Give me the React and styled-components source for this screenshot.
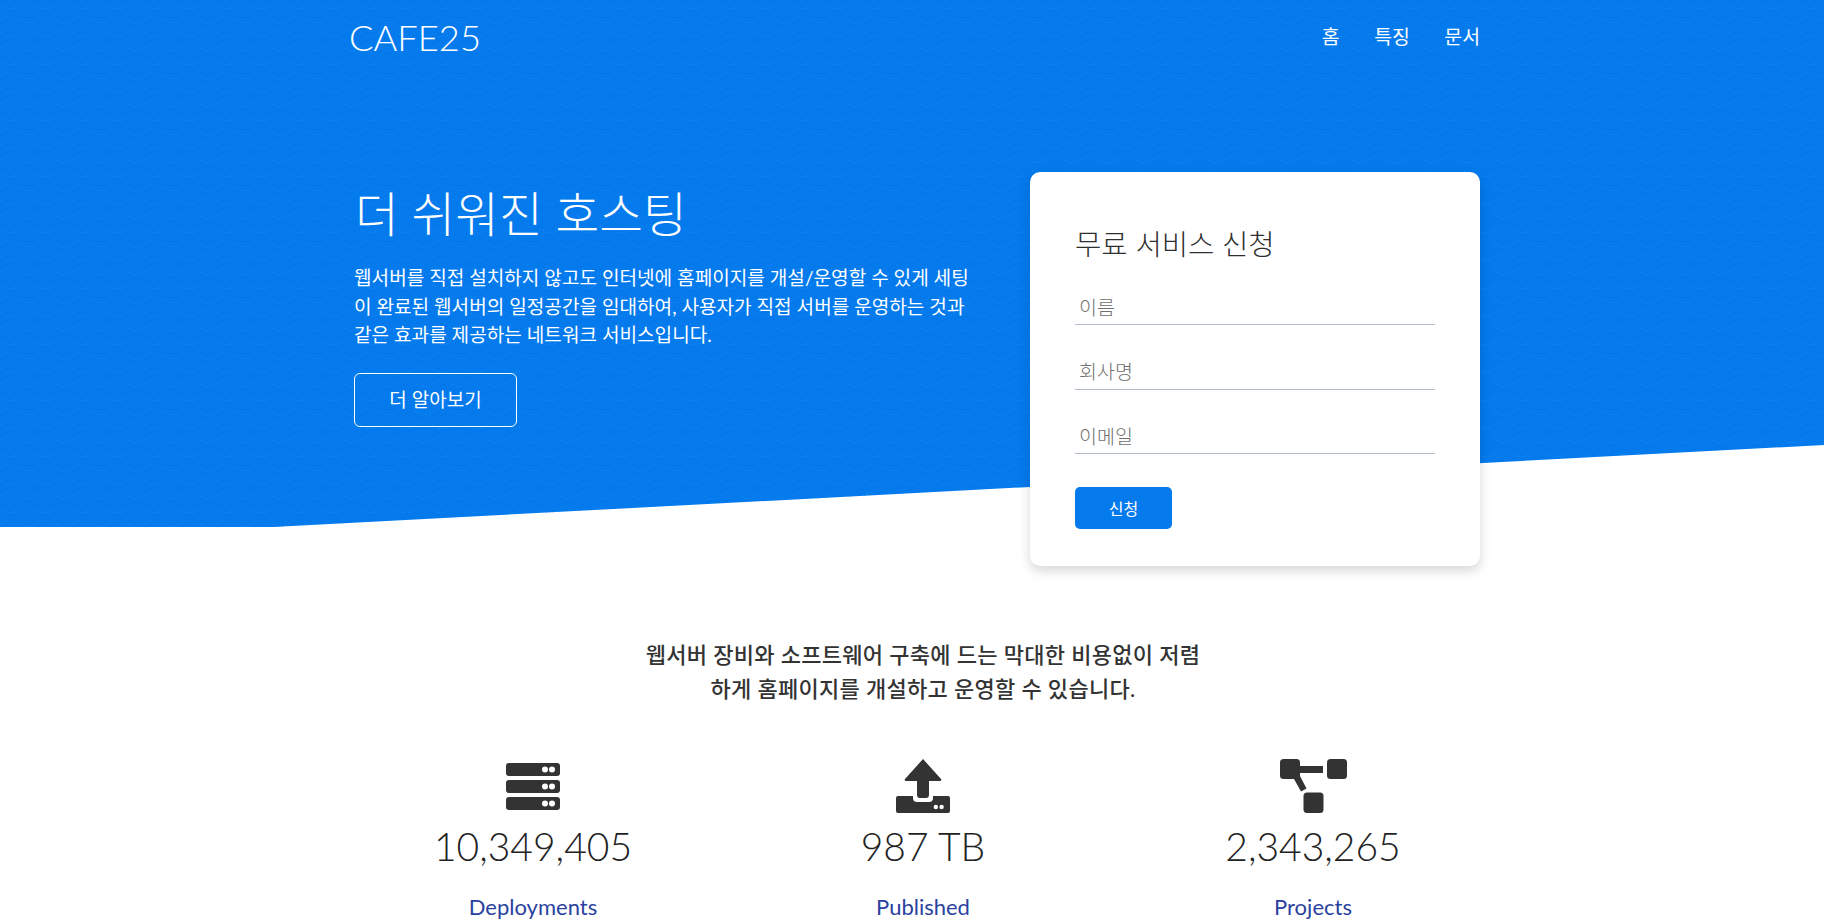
import React from "react";
import styled, { createGlobalStyle } from "styled-components";

const Global = createGlobalStyle`
  html, body { margin: 0; padding: 0; background: #fff; overflow: hidden; }
  body { font-family: Lato, "Noto Sans CJK KR", sans-serif; color: #333; }
  #root { height: 923px; overflow: hidden; }
  * { box-sizing: border-box; }
`;

const buildTexture = () => {
  let rects = "";
  [0, 1].forEach((row) => {
    for (let x = 0; x < 36; x += 3) {
      const phase = (x + row * 18) % 36;
      if (phase >= 26) continue;
      const y = 5 + row * 14 + Math.round(3 * Math.sin((2 * Math.PI * phase) / 36));
      rects += `<rect x="${x}" y="${y}" width="1" height="1"/>`;
    }
  });
  const svg = `<svg xmlns="http://www.w3.org/2000/svg" width="36" height="28" fill="#178cf6">${rects}</svg>`;
  return `url("data:image/svg+xml,${encodeURIComponent(svg)}")`;
};

const Hero = styled.section`
  position: relative;
  height: 527px;
  &::before {
    content: "";
    position: absolute;
    inset: 0;
    background-color: #047aed;
    background-image: ${buildTexture()};
    clip-path: polygon(0 0, 100% 0, 100% 445px, 273px 527px, 0 527px);
  }
`;

const HeroInner = styled.div`
  position: relative;
  width: 1140px;
  margin: 0 auto;
`;

const Header = styled.header`
  display: flex;
  justify-content: space-between;
  align-items: center;
  height: 76px;
  padding: 0 2px 0 7px;
`;

const Logo = styled.div`
  margin-top: -2px;
  font-size: 36.3px;
  font-weight: 300;
  color: #fff;
`;

const Nav = styled.nav`
  display: flex;
  gap: 34.5px;
  margin-top: -5px;
`;

const NavLink = styled.a`
  font-size: 19.4px;
  font-weight: 400;
  color: #fff;
`;

const HeroBody = styled.div`
  display: flex;
  justify-content: space-between;
  align-items: flex-start;
  padding: 96px 2px 0 12px;
`;

const Intro = styled.div`
  width: 640px;
  padding-top: 13px;
  color: #fff;
`;

const Title = styled.h1`
  margin: 0 0 21px 1px;
  font-size: 47.5px;
  line-height: 58px;
  font-weight: 300;
`;

const Lead = styled.p`
  margin: 0 0 23px;
  font-size: 19.1px;
  line-height: 28.5px;
  font-weight: 400;
`;

const OutlineButton = styled.a`
  display: inline-flex;
  align-items: center;
  justify-content: center;
  width: 163px;
  height: 54px;
  padding-bottom: 3px;
  border: 1px solid #fff;
  border-radius: 6px;
  font-size: 19px;
  color: #fff;
`;

const Card = styled.form`
  width: 450px;
  height: 394px;
  padding: 53px 45px 0;
  background: #fff;
  border-radius: 10px;
  box-shadow: 0 5px 12px rgba(0,0,0,.16);
`;

const CardTitle = styled.h2`
  margin: 0 0 24px;
  font-size: 28.6px;
  line-height: 38px;
  font-weight: 300;
  color: #2f2f2f;
`;

const Field = styled.input`
  display: block;
  width: 100%;
  height: 38px;
  margin-bottom: 26.5px;
  padding: 3px 3px 0 4px;
  border: 0;
  border-bottom: 1px solid #b3bdcf;
  outline: 0;
  background: transparent;
  font-family: inherit;
  font-size: 19.5px;
  font-weight: 300;
  &::placeholder { color: #6f6f6f; opacity: 1; }
`;

const Submit = styled.button`
  display: block;
  width: 97px;
  height: 42px;
  margin-top: 33px;
  padding-bottom: 1px;
  border: 0;
  border-radius: 5px;
  background: #047aed;
  color: #fff;
  font-family: inherit;
  font-size: 16px;
`;

const Stats = styled.section`
  width: 1170px;
  margin: 0 auto;
  padding-top: 111px;
  transform: translateX(11px);
`;

const Summary = styled.p`
  margin: 0 0 53px;
  text-align: center;
  font-size: 22px;
  letter-spacing: .3px;
  line-height: 34px;
  font-weight: 500;
  color: #333;
`;

const StatGrid = styled.div`
  display: grid;
  grid-template-columns: repeat(3, 1fr);
`;

const Stat = styled.div`
  display: flex;
  flex-direction: column;
  align-items: center;
`;

const IconBox = styled.div`
  display: flex;
  align-items: center;
  justify-content: center;
  height: 54px;
  color: #333;
`;

const StatValue = styled.div`
  margin-top: 9px;
  font-size: 39px;
  line-height: 48px;
  font-weight: 300;
  color: #222;
`;

const StatLabel = styled.div`
  margin-top: 23px;
  font-size: 22px;
  line-height: 28px;
  font-weight: 400;
  color: #2a429f;
`;

const SERVER_BAR =
  "M3 0h48a3 3 0 0 1 3 3v7a3 3 0 0 1-3 3H3a3 3 0 0 1-3-3V3a3 3 0 0 1 3-3Zm33 6.5a3 3 0 1 0 6 0a3 3 0 1 0-6 0Zm7 0a3 3 0 1 0 6 0a3 3 0 1 0-6 0Z";

const ServerIcon = () => (
  <svg width="54" height="47" viewBox="0 0 54 47" fill="currentColor">
    <path fillRule="evenodd" d={SERVER_BAR} />
    <path fillRule="evenodd" d={SERVER_BAR} transform="translate(0 17)" />
    <path fillRule="evenodd" d={SERVER_BAR} transform="translate(0 34)" />
  </svg>
);

const UploadIcon = () => (
  <svg width="54" height="54" viewBox="0 0 54 54" fill="currentColor">
    <path d="M27 0 L45 20 Q46 22 44 22 H33 V36 Q33 39 30 39 H24 Q21 39 21 36 V22 H10 Q8 22 9 20 Z" />
    <path fillRule="evenodd" d="M2 37 H17 V39 Q17 43 21 43 H33 Q37 43 37 39 V37 H52 Q54 37 54 39 V52 Q54 54 52 54 H2 Q0 54 0 52 V39 Q0 37 2 37 Z M37.6 48 a2.2 2.2 0 1 0 4.4 0 a2.2 2.2 0 1 0-4.4 0 Z M43.4 48 a2.2 2.2 0 1 0 4.4 0 a2.2 2.2 0 1 0-4.4 0 Z" />
  </svg>
);

const NodesIcon = () => (
  <svg width="67" height="54" viewBox="0 0 67 54" fill="currentColor">
    <rect x="0" y="0" width="20" height="20" rx="3.5" />
    <rect x="47" y="0" width="20" height="20" rx="3.5" />
    <rect x="23.5" y="33.5" width="20" height="20.5" rx="3.5" />
    <rect x="18" y="7" width="25" height="7" />
    <path d="M14 20 L20 17 L26.5 29.5 L21 32.5 Z" />
  </svg>
);

export default function App() {
  return (
    <>
      <Global />
      <Hero>
        <HeroInner>
          <Header>
            <Logo>CAFE25</Logo>
            <Nav>
              <NavLink>홈</NavLink>
              <NavLink>특징</NavLink>
              <NavLink>문서</NavLink>
            </Nav>
          </Header>
          <HeroBody>
            <Intro>
              <Title>더 쉬워진 호스팅</Title>
              <Lead>
                웹서버를 직접 설치하지 않고도 인터넷에 홈페이지를 개설/운영할 수 있게 세팅<br />
                이 완료된 웹서버의 일정공간을 임대하여, 사용자가 직접 서버를 운영하는 것과<br />
                같은 효과를 제공하는 네트워크 서비스입니다.
              </Lead>
              <OutlineButton>더 알아보기</OutlineButton>
            </Intro>
            <Card>
              <CardTitle>무료 서비스 신청</CardTitle>
              <Field placeholder="이름" />
              <Field placeholder="회사명" />
              <Field placeholder="이메일" />
              <Submit type="button">신청</Submit>
            </Card>
          </HeroBody>
        </HeroInner>
      </Hero>
      <Stats>
        <Summary>
          웹서버 장비와 소프트웨어 구축에 드는 막대한 비용없이 저렴<br />
          하게 홈페이지를 개설하고 운영할 수 있습니다.
        </Summary>
        <StatGrid>
          <Stat>
            <IconBox><ServerIcon /></IconBox>
            <StatValue>10,349,405</StatValue>
            <StatLabel>Deployments</StatLabel>
          </Stat>
          <Stat>
            <IconBox><UploadIcon /></IconBox>
            <StatValue>987 TB</StatValue>
            <StatLabel>Published</StatLabel>
          </Stat>
          <Stat>
            <IconBox><NodesIcon /></IconBox>
            <StatValue>2,343,265</StatValue>
            <StatLabel>Projects</StatLabel>
          </Stat>
        </StatGrid>
      </Stats>
    </>
  );
}
